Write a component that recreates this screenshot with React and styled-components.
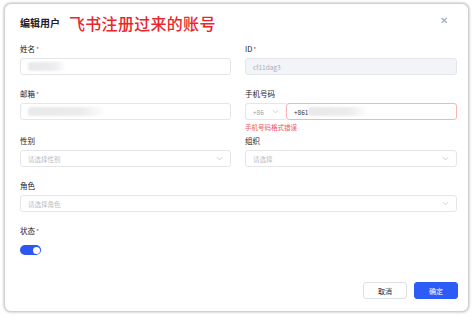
import React from "react";
import styled, { createGlobalStyle } from "styled-components";

const GlobalStyle = createGlobalStyle`
  html, body {
    margin: 0;
    padding: 0;
    background: #ffffff;
    font-family: "Noto Sans CJK SC", "Noto Sans", sans-serif;
  }
`;

const Page = styled.div`
  width: 474px;
  height: 316px;
  padding: 4px 6px 0 5px;
  box-sizing: border-box;
`;

const Modal = styled.div`
  width: 463px;
  height: 307px;
  box-sizing: border-box;
  background: #fff;
  border-radius: 6px;
  box-shadow: 0 0 0 1px #d0d0d0, 0 0 2px 2px rgba(0, 0, 0, 0.15);
  padding: 0 12px 12px 15px;
  display: flex;
  flex-direction: column;
`;

const Header = styled.div`
  height: 40px;
  display: flex;
  align-items: center;
  gap: 9px;
  position: relative;
`;

const Title = styled.div`
  font-size: 10px;
  font-weight: 700;
  color: #1d2129;
  margin-top: -4px;
`;

const Note = styled.div`
  font-size: 16px;
  color: #e8262c;
  font-weight: 500;
  letter-spacing: 0.3px;
  margin-top: -2px;
`;

const Close = styled.div`
  position: absolute;
  right: 8px;
  top: 11px;
  color: #9aa0a8;
  font-size: 10px;
  line-height: 10px;
`;

const Grid = styled.div`
  display: grid;
  grid-template-columns: 211px 212px;
  column-gap: 14px;
`;

const Item = styled.div`
  grid-column: ${(p) => (p.$full ? "1 / 3" : "auto")};
  margin-bottom: ${(p) => (p.$error ? 0 : 14)}px;
`;

const Label = styled.div`
  font-size: 7.5px;
  line-height: 10px;
  color: #1d2129;
  margin-bottom: 4px;
  display: flex;
  align-items: flex-start;
  span {
    color: #f53f3f;
    margin-left: 1px;
    font-size: 7px;
  }
`;

const Box = styled.div`
  height: 17px;
  box-sizing: border-box;
  border: 1px solid ${(p) => (p.$error ? "#f7b3b7" : "#e4e6ea")};
  border-radius: 3px;
  background: ${(p) => (p.$disabled ? "#f2f4f7" : "#fff")};
  display: flex;
  align-items: center;
  padding: 0 7px;
  font-size: 6.5px;
  color: ${(p) => (p.$disabled ? "#a9aeb6" : "#333")};
  flex: ${(p) => (p.$grow ? 1 : "none")};
`;

const CodeSelect = styled(Box)`
  width: 41px;
  border-right: none;
  border-top-right-radius: 0;
  border-bottom-right-radius: 0;
  justify-content: space-between;
  color: #9ca1a9;
`;

const Placeholder = styled.span`
  color: #b9bdc4;
  flex: 1;
`;

const Blur = styled.div`
  height: 9px;
  width: ${(p) => p.$w}px;
  border-radius: 3px;
  background: linear-gradient(90deg, #e9e9eb 0%, #ececee 70%, rgba(240, 240, 242, 0) 100%);
  filter: blur(1px);
`;

const Chevron = styled.svg`
  width: 7px;
  height: 5px;
  flex: none;
`;

const PhoneRow = styled.div`
  display: flex;
`;

const ErrorText = styled.div`
  font-size: 6.5px;
  line-height: 8px;
  color: #f2555a;
  padding-top: 3px;
  height: 13px;
`;

const Switch = styled.div`
  width: 21px;
  height: 10px;
  border-radius: 5px;
  background: #2d57f0;
  position: relative;
  margin-top: 9px;
  &::after {
    content: "";
    position: absolute;
    right: 1.5px;
    top: 1.5px;
    width: 7px;
    height: 7px;
    border-radius: 50%;
    background: #fff;
  }
`;

const Footer = styled.div`
  margin-top: auto;
  margin-right: -2px;
  display: flex;
  justify-content: flex-end;
  gap: 7px;
`;

const Button = styled.button`
  width: 44px;
  height: 17px;
  border-radius: 3px;
  font-size: 7px;
  font-family: inherit;
  padding: 0;
  cursor: pointer;
  border: 1px solid ${(p) => (p.$primary ? "#2d5bf5" : "#dcdfe4")};
  background: ${(p) => (p.$primary ? "#2d5bf5" : "#fff")};
  color: ${(p) => (p.$primary ? "#fff" : "#1d2129")};
`;

const Down = () => (
  <Chevron viewBox="0 0 8 5">
    <path d="M1 1 L4 4 L7 1" fill="none" stroke="#b4b8bf" strokeWidth="0.8" />
  </Chevron>
);

export default function App() {
  return (
    <Page>
      <GlobalStyle />
      <Modal>
        <Header>
          <Title>编辑用户</Title>
          <Note>飞书注册过来的账号</Note>
          <Close>✕</Close>
        </Header>
        <Grid>
          <Item>
            <Label>
              姓名<span>*</span>
            </Label>
            <Box>
              <Blur $w={38} />
            </Box>
          </Item>
          <Item>
            <Label>
              ID<span>*</span>
            </Label>
            <Box $disabled>cf11dag3</Box>
          </Item>
          <Item>
            <Label>
              邮箱<span>*</span>
            </Label>
            <Box>
              <Blur $w={78} />
            </Box>
          </Item>
          <Item $error>
            <Label>手机号码</Label>
            <PhoneRow>
              <CodeSelect>
                +86
                <Down />
              </CodeSelect>
              <Box $grow $error>
                +861
                <Blur $w={60} />
              </Box>
            </PhoneRow>
            <ErrorText>手机号码格式错误</ErrorText>
          </Item>
          <Item>
            <Label>性别</Label>
            <Box>
              <Placeholder>请选择性别</Placeholder>
              <Down />
            </Box>
          </Item>
          <Item>
            <Label>组织</Label>
            <Box>
              <Placeholder>请选择</Placeholder>
              <Down />
            </Box>
          </Item>
          <Item $full>
            <Label>角色</Label>
            <Box>
              <Placeholder>请选择角色</Placeholder>
              <Down />
            </Box>
          </Item>
          <Item>
            <Label>
              状态<span>*</span>
            </Label>
            <Switch />
          </Item>
        </Grid>
        <Footer>
          <Button>取消</Button>
          <Button $primary>确定</Button>
        </Footer>
      </Modal>
    </Page>
  );
}
